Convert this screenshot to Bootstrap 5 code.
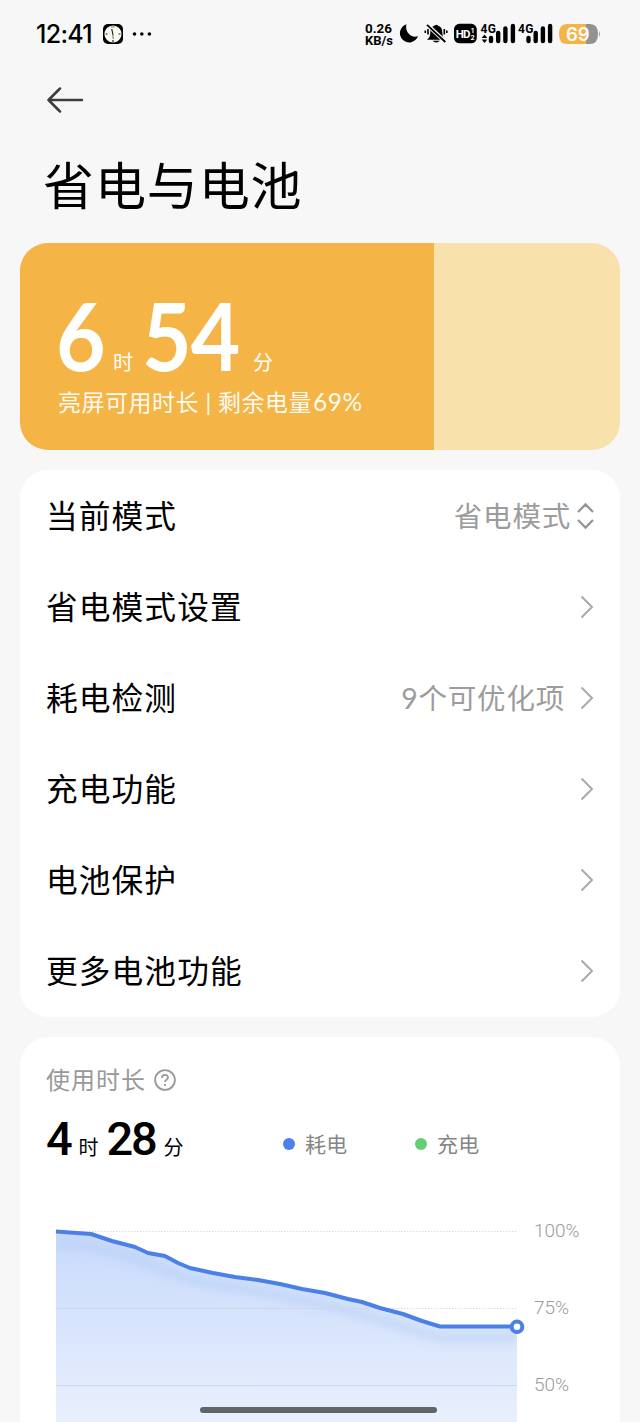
<!DOCTYPE html>
<html lang="zh-CN">
<head>
<meta charset="utf-8">
<meta name="viewport" content="width=device-width, initial-scale=1">
<title>省电与电池</title>
<link href="https://cdn.jsdelivr.net/npm/bootstrap@5.3.0/dist/css/bootstrap.min.css" rel="stylesheet">
<style>
body{background:#f7f7f7;color:#000;font-family:Lato,"Noto Sans CJK SC",sans-serif;height:1422px;overflow:hidden;line-height:1}
svg{display:block;flex:none}
.phone{width:640px;height:1422px;overflow:hidden;padding:0 20px}
.statusbar{height:68px;margin:0 -20px;padding:0 38px 0 36px}
.clock{font:500 25px/30px Inter,sans-serif;letter-spacing:-.7px;width:66px}
.back-row{height:64px;padding-left:27px}
.page-title{font-size:51px;line-height:74px;height:74px;letter-spacing:.9px;padding-left:23px;margin:17px 0 20px;font-weight:400}
.battery{height:207px;border-radius:28px;background:#f8e1ab;overflow:hidden}
.battery-level{background:#f4b446;height:100%;padding:48px 0 0 38px;color:#fff;white-space:nowrap}
.big{font-size:93px;line-height:88px;font-weight:700;letter-spacing:-1px;transform:scaleX(.92);transform-origin:0 50%;margin-left:-2px}
.big-h{width:57px}
.big-m{width:107px;margin-left:1px}
.unit{font-size:20px;line-height:26px;font-weight:400}
.battery .unit{transform:translateY(-1px)}
.caption-line{font-size:23px;line-height:30px;margin-top:8px;letter-spacing:.5px;font-weight:400;color:#fffaf0}
.caption-line b{font-weight:400;font-size:24.5px;margin-left:1px;line-height:1}
.panel{background:#fff;border:0;border-radius:28px}
.settings{margin-top:20px;height:547px}
.setting{height:91px;padding:2px 26px 0 26px;font-size:31.7px;letter-spacing:1.1px;color:#000}
.setting svg{margin-top:-2px}
.setting .value{font-size:28.5px;color:#9c9c9c;letter-spacing:.8px;margin-right:15px}
.setting .value-mode{margin-right:6px}
.usage{margin-top:20px;height:430px;padding:27px 26px 0}
.usage-title{font-size:24px;line-height:32px;color:#999;letter-spacing:1px;font-weight:400}
.total{height:60px;margin-top:13px}
.num{font:500 47px/60px Roboto,sans-serif;letter-spacing:-2.2px}
.legend-item{font-size:21px;color:#858585;line-height:28px;letter-spacing:.3px;padding-top:10px}
.dot{width:12px;height:12px;border-radius:50%;margin-right:10px}
.dot-use{background:#4b80ee}
.dot-charge{background:#65ce72}
.chart{margin:43px -26px 0}
.chart text{font:300 19px Roboto,sans-serif;fill:#9b9b9b}
.home-bar{width:237px;height:6px;border-radius:3px;background:#626568;left:200px;top:1407px}
</style>
</head>
<body>
<main class="phone position-relative">
  <header class="statusbar d-flex align-items-center">
    <span class="clock">12:41</span>
    <svg width="50" height="22" viewBox="0 0 50 22">
      <rect x="1" y="1" width="20" height="20" rx="5"/><circle cx="11" cy="11" r="8.6" fill="#fbfaf3"/>
      <path d="M11 17v2M3.500 11h2m11 0h2M11 12l-1.200-6" stroke="#222" stroke-width="1.2"/><path d="M9 4h3.500M10.700 11l.6 5" stroke="#8a7750" stroke-width="1.100"/>
      <circle cx="32.5" cy="11" r="1.8"/><circle cx="39.8" cy="11" r="1.8"/><circle cx="47.4" cy="11" r="1.8"/>
    </svg>
    <svg class="ms-auto" width="238" height="28" viewBox="364 20 238 28">
      <g font-family="Roboto" font-weight="700" font-size="12"><text x="365" y="33" textLength="27" lengthAdjust="spacingAndGlyphs">0.26</text><text x="365" y="44.500" textLength="28" lengthAdjust="spacingAndGlyphs">KB/s</text></g>
      <path d="M406.500 24.200A9.300 9.300 0 1 0 418 36.200C411 38.500 404.500 31.500 406.500 24.200z"/>
      <path d="M427 39.800c3-2.500 3.300-4.500 3.300-8 0-3.700 2-5.500 4.500-6.300q1.500-1.500 3 0c2.900.8 4.500 3.300 4.500 6.700 0 3.800.7 5.300 2.900 7.600zM432.500 40.800h7.500q-3.700 3.400-7.500 0z"/>
      <path d="M428 29v5.500m-2.700-4v2.500m19-4v5.500m2.500-4v2.500" stroke="#000" stroke-width="1.600"/>
      <path d="M427 24.500l18.500 17.500" stroke="#f7f7f7" stroke-width="4"/><path d="M427 24.800l18.300 17.200" stroke="#000" stroke-width="1.800"/>
      <rect x="454" y="23.800" width="22.800" height="19.500" rx="5.500"/>
      <text x="455.800" y="37.800" font-family="Roboto" font-weight="700" font-size="11.500" fill="#fff" textLength="14.800">HD</text>
      <text x="471" y="33" font-family="Inter" font-weight="700" font-size="6.500" fill="#fff">1</text><text x="470.500" y="40" font-family="Inter" font-weight="700" font-size="6.500" fill="#fff">2</text>
      <g font-family="Roboto" font-weight="700" font-size="12"><text x="480.500" y="33" textLength="15.500">4G</text><text x="518" y="33" textLength="15.500">4G</text></g>
      <path d="M481.700 38l2.800-3.500 2.800 3.500zM481.700 39.500h5.600l-2.800 3.500z"/>
      <path d="M491 38v3m7.200-8v8m7.200-12.500v12.500m7.500-15v15M528.500 38v3m7.200-8v8m7.200-12.500v12.500m7.200-15v15" stroke="#000" stroke-width="4.400" stroke-linecap="round"/>
      <path d="M585 24h5q8 0 8 10t-8 10h-5z" fill="#929292"/><path d="M567 24h19v20h-19q-8 0-8-10t8-10z" fill="#f4b446"/><path d="M599 31q2 3 0 6z" fill="#999"/>
      <text x="566" y="40.500" font-family="Inter" font-weight="600" font-size="18.500" fill="#fff" textLength="23.500">69</text>
    </svg>
  </header>
  <div class="back-row d-flex align-items-center">
    <svg width="38" height="28" viewBox="0 0 38 28" fill="none" stroke="#3d3d3d" stroke-width="2.500" stroke-linecap="round" stroke-linejoin="round"><path d="M35 14H1.500M13 2.500L1.500 14 13 25.500"/></svg>
  </div>
  <h1 class="page-title">省电与电池</h1>
  <section class="battery">
    <div class="battery-level" style="width:69%">
      <div class="d-flex align-items-baseline"><span class="big big-h">6</span><span class="unit me-2">时</span><span class="big big-m">54</span><span class="unit ms-1">分</span></div>
      <div class="caption-line">亮屏可用时长 | 剩余电量<b>69%</b></div>
    </div>
  </section>
  <section class="card panel settings">
    <div class="setting d-flex align-items-center justify-content-between"><span>当前模式</span><span class="d-flex align-items-center"><span class="value value-mode">省电模式</span><svg width="17" height="28" viewBox="0 0 17 28" fill="none" stroke="#959595" stroke-width="2.300"><path d="M1 10l7.500-7.500L16 10M1 18l7.500 7.500L16 18"/></svg></span></div>
    <div class="setting d-flex align-items-center justify-content-between"><span>省电模式设置</span><svg width="14" height="24" viewBox="0 0 14 24" fill="none" stroke="#aaa" stroke-width="2"><path d="M1.500 1.500L12 12 1.500 22.500"/></svg></div>
    <div class="setting d-flex align-items-center justify-content-between"><span>耗电检测</span><span class="d-flex align-items-center"><span class="value">9个可优化项</span><svg width="14" height="24" viewBox="0 0 14 24" fill="none" stroke="#aaa" stroke-width="2"><path d="M1.500 1.500L12 12 1.500 22.500"/></svg></span></div>
    <div class="setting d-flex align-items-center justify-content-between"><span>充电功能</span><svg width="14" height="24" viewBox="0 0 14 24" fill="none" stroke="#aaa" stroke-width="2"><path d="M1.500 1.500L12 12 1.500 22.500"/></svg></div>
    <div class="setting d-flex align-items-center justify-content-between"><span>电池保护</span><svg width="14" height="24" viewBox="0 0 14 24" fill="none" stroke="#aaa" stroke-width="2"><path d="M1.500 1.500L12 12 1.500 22.500"/></svg></div>
    <div class="setting d-flex align-items-center justify-content-between"><span>更多电池功能</span><svg width="14" height="24" viewBox="0 0 14 24" fill="none" stroke="#aaa" stroke-width="2"><path d="M1.500 1.500L12 12 1.500 22.500"/></svg></div>
  </section>
  <section class="card panel usage">
    <div class="usage-title d-flex align-items-center gap-2"><span>使用时长</span><svg width="22" height="22" viewBox="0 0 22 22" fill="none" stroke="#999" stroke-width="1.800"><circle cx="11" cy="11" r="9.900"/><path d="M8 9c0-4 6-4 6-.5 0 2.300-3 2.200-3 4.500M11 15v2"/></svg></div>
    <div class="total d-flex align-items-center">
      <div class="d-flex align-items-baseline" style="width:237px"><span class="num">4</span><span class="unit ms-2 me-2">时</span><span class="num">28</span><span class="unit ms-2">分</span></div>
      <div class="legend-item d-flex align-items-center" style="width:132px"><i class="dot dot-use"></i><span>耗电</span></div>
      <div class="legend-item d-flex align-items-center"><i class="dot dot-charge"></i><span>充电</span></div>
    </div>
    <div class="chart">
      <svg width="600" height="210" viewBox="20 1212 600 210">
        <defs><linearGradient id="area" x1="0" y1="1231" x2="0" y2="1422" gradientUnits="userSpaceOnUse"><stop stop-color="#c7d9fc"/><stop offset="1" stop-color="#e9f0fd"/></linearGradient>
        <filter id="soft" x="-10%" y="-20%" width="120%" height="150%"><feGaussianBlur stdDeviation="4"/></filter>
        <clipPath id="under"><path d="M56 1231L91 1234 112 1241 135 1247 148 1253 165 1256 178 1263 190 1268 213 1273 235 1277 258 1280 280 1284 302 1289 325 1293 348 1299 362 1302 380 1308 403 1314 422 1321 440 1326.500H517V1422H56Z"/></clipPath></defs>
        <path d="M56 1231.500H517M56 1308.500H517M56 1385.500H517" stroke="#ddd" stroke-dasharray="1.500 1.500"/>
        <path fill="url(#area)" d="M56 1231L91 1234 112 1241 135 1247 148 1253 165 1256 178 1263 190 1268 213 1273 235 1277 258 1280 280 1284 302 1289 325 1293 348 1299 362 1302 380 1308 403 1314 422 1321 440 1326.500H517V1422H56Z"/>
        <g clip-path="url(#under)"><path d="M56 1243L91 1246 135 1259 190 1280 258 1292 325 1305 380 1320 440 1338H517" fill="none" stroke="#aac8ef" stroke-opacity=".45" stroke-width="8" filter="url(#soft)"/><path d="M56 1308.500H517M56 1385.500H517" stroke="#cbd7ec"/></g>
        <path d="M56 1231.500L91 1234 112 1241 135 1247 148 1253 165 1256 178 1263 190 1268 213 1273 235 1277 258 1280 280 1284 302 1289 325 1293 348 1299 362 1302 380 1308 403 1314 422 1321 440 1326.500H517" fill="none" stroke="#4b80e8" stroke-width="4" stroke-linejoin="round"/>
        <circle cx="517" cy="1326.800" r="5.300" fill="#fff" stroke="#4b80e8" stroke-width="4"/>
        <text x="534" y="1237">100%</text><text x="534" y="1314">75%</text><text x="534" y="1391">50%</text>
      </svg>
    </div>
  </section>
  <div class="home-bar position-absolute"></div>
</main>
<script src="https://cdn.jsdelivr.net/npm/bootstrap@5.3.0/dist/js/bootstrap.bundle.min.js"></script>
</body>
</html>
